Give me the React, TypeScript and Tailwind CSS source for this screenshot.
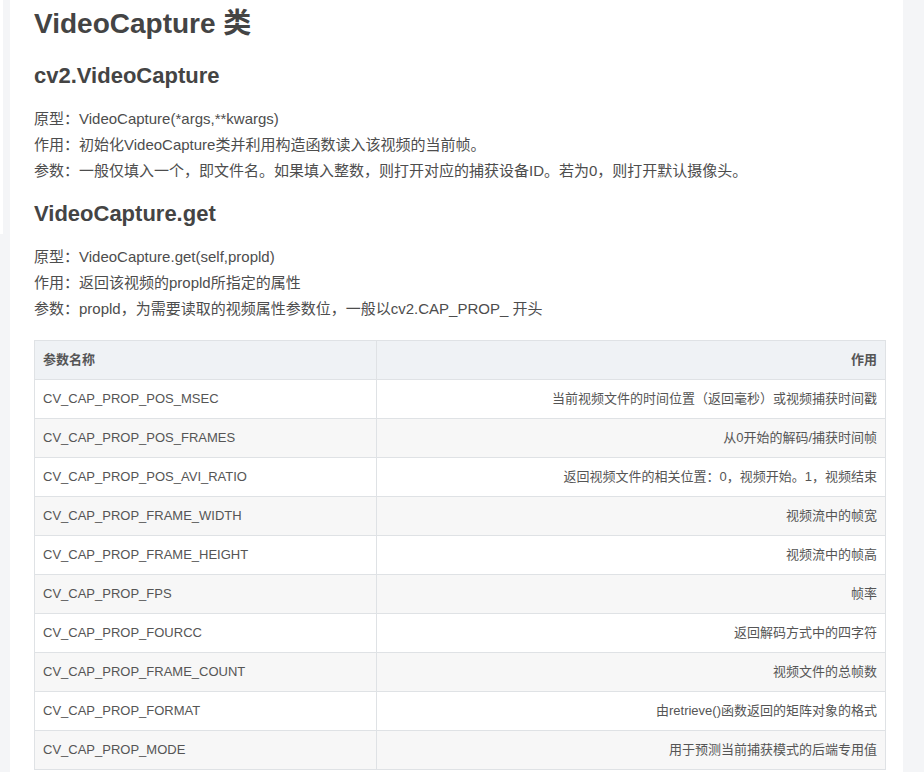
const rows: [string, string][] = [
  ["CV_CAP_PROP_POS_MSEC", "当前视频文件的时间位置（返回毫秒）或视频捕获时间戳"],
  ["CV_CAP_PROP_POS_FRAMES", "从0开始的解码/捕获时间帧"],
  ["CV_CAP_PROP_POS_AVI_RATIO", "返回视频文件的相关位置：0，视频开始。1，视频结束"],
  ["CV_CAP_PROP_FRAME_WIDTH", "视频流中的帧宽"],
  ["CV_CAP_PROP_FRAME_HEIGHT", "视频流中的帧高"],
  ["CV_CAP_PROP_FPS", "帧率"],
  ["CV_CAP_PROP_FOURCC", "返回解码方式中的四字符"],
  ["CV_CAP_PROP_FRAME_COUNT", "视频文件的总帧数"],
  ["CV_CAP_PROP_FORMAT", "由retrieve()函数返回的矩阵对象的格式"],
  ["CV_CAP_PROP_MODE", "用于预测当前捕获模式的后端专用值"],
];

export default function App() {
  return (
    <div
      className="h-[772px] overflow-hidden bg-[#f4f5f7] flex"
      style={{ fontFamily: '"Liberation Sans", "Noto Sans CJK SC", sans-serif' }}
    >
      <div className="w-[3px] h-[234px] bg-white shrink-0" />
      <div className="ml-[7px] w-[893px] bg-white pl-[24px] pr-[17px] text-[#4d4d4d]">
        <h1 className="text-[28px] font-bold text-[#444] leading-[36px] mt-[6px]">VideoCapture 类</h1>
        <h2 className="text-[22px] font-bold text-[#444] leading-[30px] mt-[19px]">cv2.VideoCapture</h2>
        <div className="mt-[15px] text-[15px] leading-[26px]">
          <p>原型：VideoCapture(*args,**kwargs)</p>
          <p>作用：初始化VideoCapture类并利用构造函数读入该视频的当前帧。</p>
          <p>参数：一般仅填入一个，即文件名。如果填入整数，则打开对应的捕获设备ID。若为0，则打开默认摄像头。</p>
        </div>
        <h2 className="text-[22px] font-bold text-[#444] leading-[30px] mt-[15px]">VideoCapture.get</h2>
        <div className="mt-[15px] text-[15px] leading-[26px]">
          <p>原型：VideoCapture.get(self,propld)</p>
          <p>作用：返回该视频的propld所指定的属性</p>
          <p>参数：propld，为需要读取的视频属性参数位，一般以cv2.CAP_PROP_ 开头</p>
        </div>
        <table className="mt-[18px] w-[852px] border-collapse text-[13px] text-[#555]">
          <thead>
            <tr className="bg-[#eff2f5] h-[39px]">
              <th className="border border-[#dfe2e5] text-left font-bold px-[8px] w-[342px]">参数名称</th>
              <th className="border border-[#dfe2e5] text-right font-bold px-[8px]">作用</th>
            </tr>
          </thead>
          <tbody>
            {rows.map(([k, v], i) => (
              <tr key={k} className={`h-[39px] ${i % 2 === 1 ? "bg-[#f7f7f7]" : "bg-white"}`}>
                <td className="border border-[#dfe2e5] px-[8px]">{k}</td>
                <td className="border border-[#dfe2e5] px-[8px] text-right">{v}</td>
              </tr>
            ))}
          </tbody>
        </table>
      </div>
    </div>
  );
}
